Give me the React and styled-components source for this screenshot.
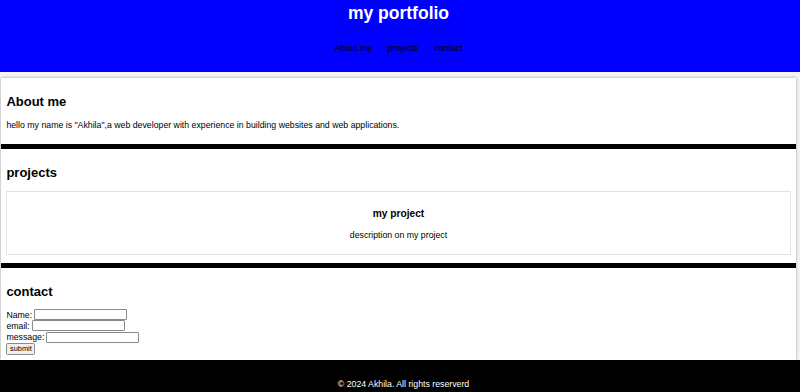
import React from "react";
import styled, { createGlobalStyle } from "styled-components";

const Global = createGlobalStyle`
  html, body { margin: 0; padding: 0; }
  body {
    background: #f4f4f4;
    font-family: "Liberation Sans", Arial, sans-serif;
    font-size: 8.75px;
    color: #000;
  }
`;

const Header = styled.header`
  background: #0000ff;
  height: 72px;
  box-sizing: border-box;
  padding: 3px 3px 0 0;
  text-align: center;
`;

const Title = styled.h1`
  margin: 0;
  color: #fff;
  font-size: 17.5px;
  line-height: 20px;
  font-weight: bold;
`;

const Nav = styled.nav`
  margin-top: 20px;
  display: flex;
  justify-content: center;
`;

const NavLink = styled.a`
  color: #000;
  text-decoration: none;
  margin: 0 8px;
  font-size: 8.75px;
  line-height: 10px;
`;

const Main = styled.main`
  padding-top: 6px;
`;

const Section = styled.section`
  background: #fff;
  margin: 0 4px 0 1px;
  padding: 5.4px;
  border-bottom: 5.5px solid #000;
  box-shadow: 0 0 3px rgba(0, 0, 0, 0.35);
  &:last-child { border-bottom: none; }
`;

const Heading = styled.h2`
  font-size: 13px;
  line-height: 15px;
  margin: 10.8px 0;
  font-weight: bold;
`;

const Text = styled.p`
  margin: 8.7px 0;
  line-height: 10px;
`;

const Card = styled.div`
  border: 1px solid #e2e2e2;
  padding: 5.4px;
  margin: 1px 0 3px;
  text-align: center;
`;

const CardTitle = styled.h3`
  font-size: 10.2px;
  line-height: 11.7px;
  margin: 10.2px 0;
  font-weight: bold;
`;

const Form = styled.form`
  display: flex;
  flex-direction: column;
  align-items: flex-start;
  margin-top: -1px;
`;

const Row = styled.label`
  display: flex;
  align-items: center;
  height: 11.3px;
  font-size: 8.75px;
  line-height: 10px;
`;

const Input = styled.input`
  width: 93px;
  height: 11px;
  box-sizing: border-box;
  margin: 0 0 0 2px;
  padding: 0;
  border: 1px solid #8a8a8a;
  border-radius: 1px;
  background: #fff;
  font-size: 7px;
`;

const Button = styled.button`
  width: 29px;
  height: 12px;
  box-sizing: border-box;
  padding: 0;
  font-family: "Liberation Sans", Arial, sans-serif;
  font-size: 7.4px;
  line-height: 10px;
  color: #000;
  background: #efefef;
  border: 1px solid #8a8a8a;
  border-radius: 1.5px;
`;

const Footer = styled.footer`
  background: #000;
  color: #fff;
  text-align: center;
  padding: 19px 0 10px 7px;
  line-height: 10px;
`;

export default function App() {
  return (
    <>
      <Global />
      <Header>
        <Title>my portfolio</Title>
        <Nav>
          <NavLink href="#about">About me</NavLink>
          <NavLink href="#projects">projects</NavLink>
          <NavLink href="#contact">contact</NavLink>
        </Nav>
      </Header>
      <Main>
        <Section id="about">
          <Heading>About me</Heading>
          <Text>
            hello my name is "Akhila",a web developer with experience in building
            websites and web applications.
          </Text>
        </Section>
        <Section id="projects">
          <Heading>projects</Heading>
          <Card>
            <CardTitle>my project</CardTitle>
            <Text>description on my project</Text>
          </Card>
        </Section>
        <Section id="contact">
          <Heading>contact</Heading>
          <Form onSubmit={(e) => e.preventDefault()}>
            <Row>
              Name:<Input type="text" />
            </Row>
            <Row>
              email:<Input type="email" />
            </Row>
            <Row>
              message:<Input type="text" />
            </Row>
            <Button type="submit">submit</Button>
          </Form>
        </Section>
      </Main>
      <Footer>© 2024 Akhila. All rights reserverd</Footer>
    </>
  );
}
